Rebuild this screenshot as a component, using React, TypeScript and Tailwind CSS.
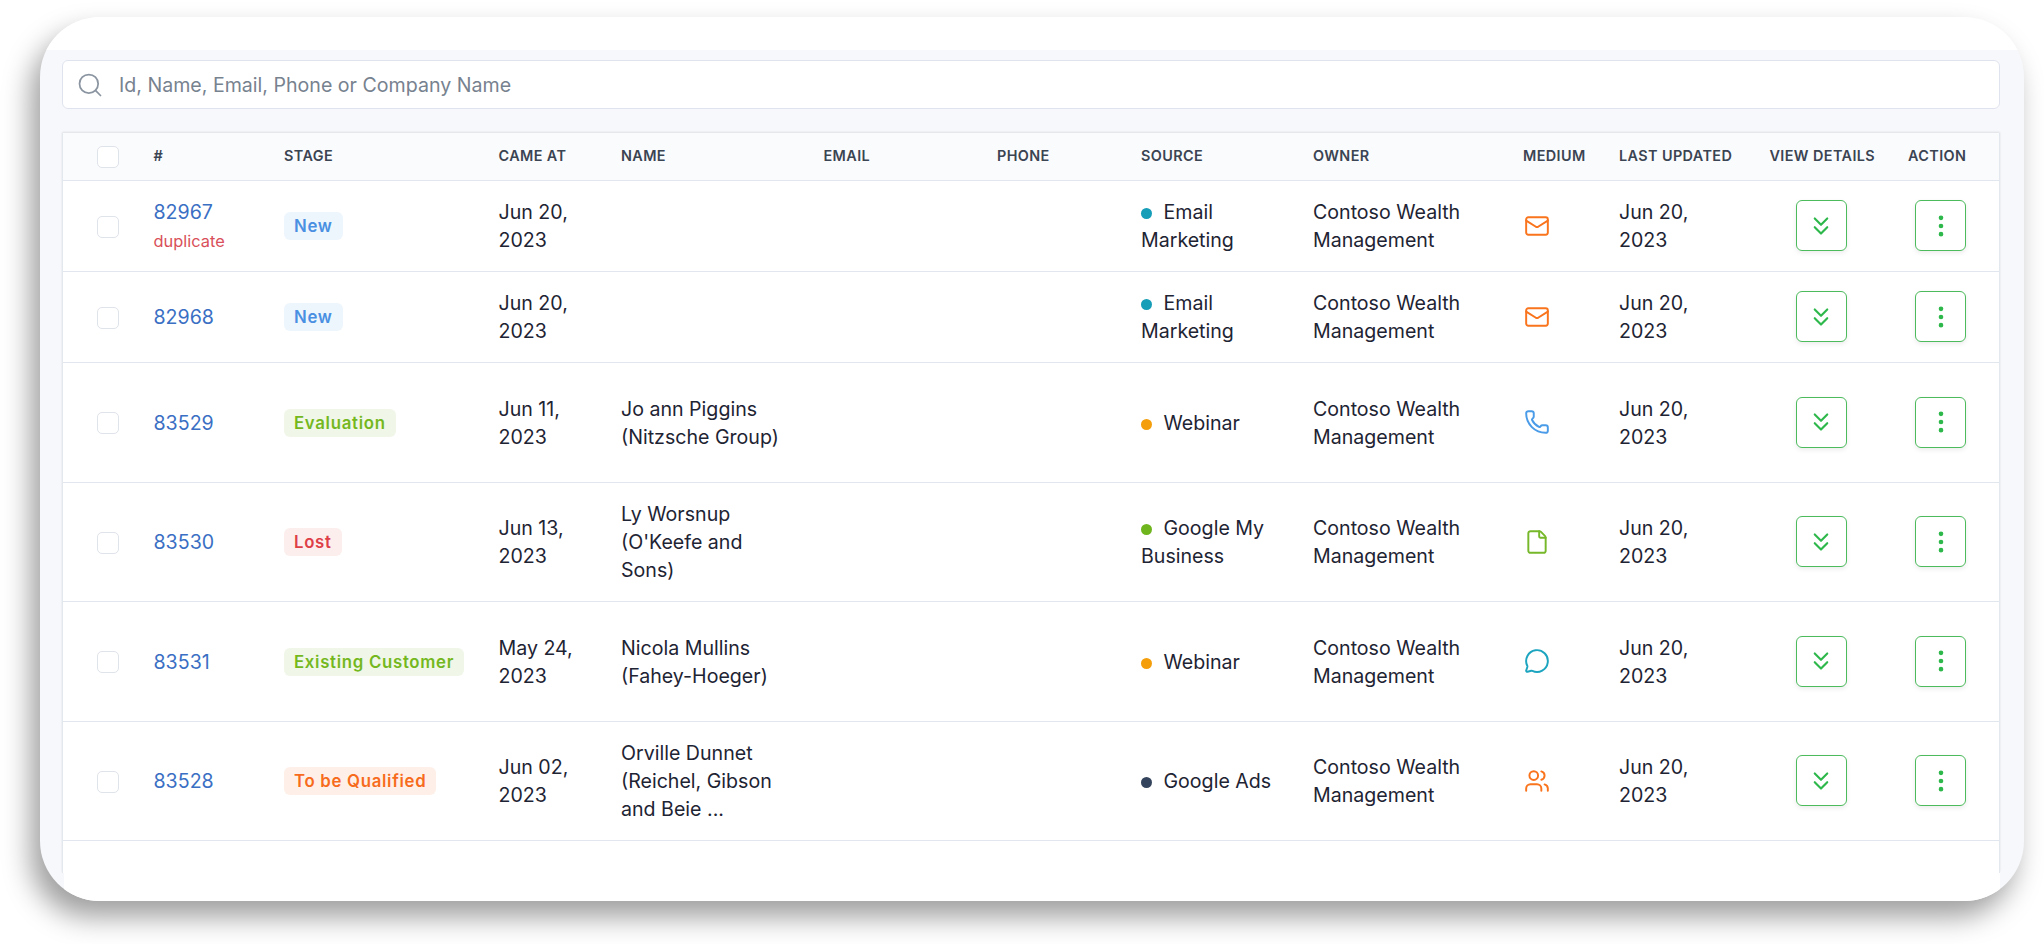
import { ChevronsDown, EllipsisVertical, File, Mail, MessageCircle, Phone, Search, Users } from 'lucide-react';

const headers = ['#', 'STAGE', 'CAME AT', 'NAME', 'EMAIL', 'PHONE', 'SOURCE', 'OWNER', 'MEDIUM', 'LAST UPDATED', 'VIEW DETAILS', 'ACTION'];

const stages = {
    new: 'bg-[#eef6fd] text-[#4a90e2]',
    evaluation: 'bg-[#f0f7e8] text-[#74b81e]',
    lost: 'bg-[#fdeeee] text-[#de3f47]',
    qualify: 'bg-[#fef0e8] text-[#f76b1c]',
};

const leads = [
    { id: '82967', dup: true, stage: 'New', stageClass: stages.new, came: 'Jun 20, 2023', name: '', dot: 'bg-[#169db8]', source: 'Email Marketing', icon: Mail, iconClass: 'text-[#f9741c]', rowClass: 'h-[91px]' },
    { id: '82968', dup: false, stage: 'New', stageClass: stages.new, came: 'Jun 20, 2023', name: '', dot: 'bg-[#169db8]', source: 'Email Marketing', icon: Mail, iconClass: 'text-[#f9741c]', rowClass: 'h-[91px]' },
    { id: '83529', dup: false, stage: 'Evaluation', stageClass: stages.evaluation, came: 'Jun 11, 2023', name: 'Jo ann Piggins (Nitzsche Group)', dot: 'bg-[#f59e0b]', source: 'Webinar', icon: Phone, iconClass: 'text-[#4a9be8]', rowClass: 'h-[120px]' },
    { id: '83530', dup: false, stage: 'Lost', stageClass: stages.lost, came: 'Jun 13, 2023', name: "Ly Worsnup (O'Keefe and Sons)", dot: 'bg-[#6fb51e]', source: 'Google My Business', icon: File, iconClass: 'text-[#76b82a]', rowClass: 'h-[119px]' },
    { id: '83531', dup: false, stage: 'Existing Customer', stageClass: stages.evaluation, came: 'May 24, 2023', name: 'Nicola Mullins (Fahey-Hoeger)', dot: 'bg-[#f59e0b]', source: 'Webinar', icon: MessageCircle, iconClass: 'text-[#1da5c0]', rowClass: 'h-[120px]' },
    { id: '83528', dup: false, stage: 'To be Qualified', stageClass: stages.qualify, came: 'Jun 02, 2023', name: 'Orville Dunnet (Reichel, Gibson and Beie ...', dot: 'bg-[#34445c]', source: 'Google Ads', icon: Users, iconClass: 'text-[#f9741c]', rowClass: 'h-[119px]' },
];

function Checkbox() {
    return <div className="mt-[2px] ml-[34px] h-[22px] w-[22px] rounded-[5px] border border-[#dfe3ea] bg-white" />;
}

function ActionButton({ children }: { children: React.ReactNode }) {
    return (
        <button className="flex h-[51px] w-[51px] items-center justify-center rounded-[6px] border-[1.5px] border-[#4cbb5c] bg-white text-[#2eb84c] shadow-[0_2px_5px_rgba(0,0,0,0.08)]">
            {children}
        </button>
    );
}

export default function App() {
    return (
        <div className="h-[944px] w-[2044px] overflow-hidden bg-white pt-[17px] pl-[40px] font-['Inter',sans-serif] text-[19.6px] leading-[28px] text-[#1e2433]">
            <div className="flex h-[884px] w-[1984px] flex-col overflow-hidden rounded-[60px] bg-[#f7f8fc] shadow-[-9px_16px_28px_rgba(0,0,0,0.38)]">
                <div className="h-[33px] shrink-0 bg-white" />
                <div className="flex min-h-0 flex-1 flex-col pt-[10px] pr-[24px] pl-[22px]">
                    {/* Search */}
                    <div className="flex h-[49px] shrink-0 items-center gap-[15px] rounded-[6px] border border-[#dfe3ee] bg-white pl-[13px]">
                        <Search size={28} strokeWidth={1.5} className="text-[#8b95a1]" />
                        <input
                            className="flex-1 bg-transparent outline-none placeholder:text-[#77828f]"
                            placeholder="Id, Name, Email, Phone or Company Name"
                        />
                    </div>

                    {/* Table */}
                    <div className="mt-[24px] flex-1 border-x border-[#e3e7ee] bg-white shadow-[0_-1px_2px_rgba(0,0,0,0.1)]">
                        <table className="w-full table-fixed border-collapse">
                            <colgroup>
                                <col className="w-[90.5px]" />
                                <col className="w-[130.5px]" />
                                <col className="w-[214.5px]" />
                                <col className="w-[122.5px]" />
                                <col className="w-[202.5px]" />
                                <col className="w-[173.5px]" />
                                <col className="w-[144px]" />
                                <col className="w-[172px]" />
                                <col className="w-[210px]" />
                                <col className="w-[96px]" />
                                <col className="w-[150.5px]" />
                                <col className="w-[138.5px]" />
                                <col />
                            </colgroup>
                            <thead>
                                <tr className="h-[47px] border-b border-[#e2e6ee] bg-[#fafbfd]">
                                    <th className="p-0"><Checkbox /></th>
                                    {headers.map(h => (
                                        <th key={h} className="p-0 text-left text-[14.4px] font-semibold tracking-[0.4px] text-[#3b4452]">{h}</th>
                                    ))}
                                </tr>
                            </thead>
                            <tbody>
                                {leads.map(lead => (
                                    <tr key={lead.id} className={`${lead.rowClass} border-b border-[#e2e6ee]`}>
                                        <td className="p-0"><Checkbox /></td>
                                        <td className={lead.dup ? 'p-0 pt-[3px]' : 'p-0 pt-px'}>
                                            <div className="text-[#3a6fc4]">{lead.id}</div>
                                            {lead.dup && <div className="text-[16.4px] leading-[30px] text-[#d9505a]">duplicate</div>}
                                        </td>
                                        <td className="p-0">
                                            <span className={`inline-block rounded-[6px] px-[10px] py-0 text-[16.8px] font-semibold leading-[28px] tracking-[0.7px] ${lead.stageClass}`}>
                                                {lead.stage}
                                            </span>
                                        </td>
                                        <td className="p-0 pt-px"><div className="w-[100px]">{lead.came}</div></td>
                                        <td className="p-0 pt-px"><div className="w-[165px]">{lead.name}</div></td>
                                        <td className="p-0" />
                                        <td className="p-0" />
                                        <td className="p-0 pt-px">
                                            <div className="w-[142px]">
                                                <span className={`mr-[11.5px] inline-block h-[11px] w-[11px] rounded-full ${lead.dot}`} />
                                                {lead.source}
                                            </div>
                                        </td>
                                        <td className="p-0 pt-px"><div className="w-[165px]">Contoso Wealth Management</div></td>
                                        <td className="p-0 pl-px"><lead.icon size={26} strokeWidth={1.8} className={lead.iconClass} /></td>
                                        <td className="p-0 pt-px"><div className="w-[100px]">Jun 20, 2023</div></td>
                                        <td className="p-0 pl-[26px]"><ActionButton><ChevronsDown size={30} strokeWidth={1.7} /></ActionButton></td>
                                        <td className="p-0 pl-[7px]"><ActionButton><EllipsisVertical size={28} strokeWidth={2} /></ActionButton></td>
                                    </tr>
                                ))}
                            </tbody>
                        </table>
                    </div>
                </div>
                <div className="mx-[24px] h-[28px] shrink-0 bg-white" />
            </div>
        </div>
    );
}
